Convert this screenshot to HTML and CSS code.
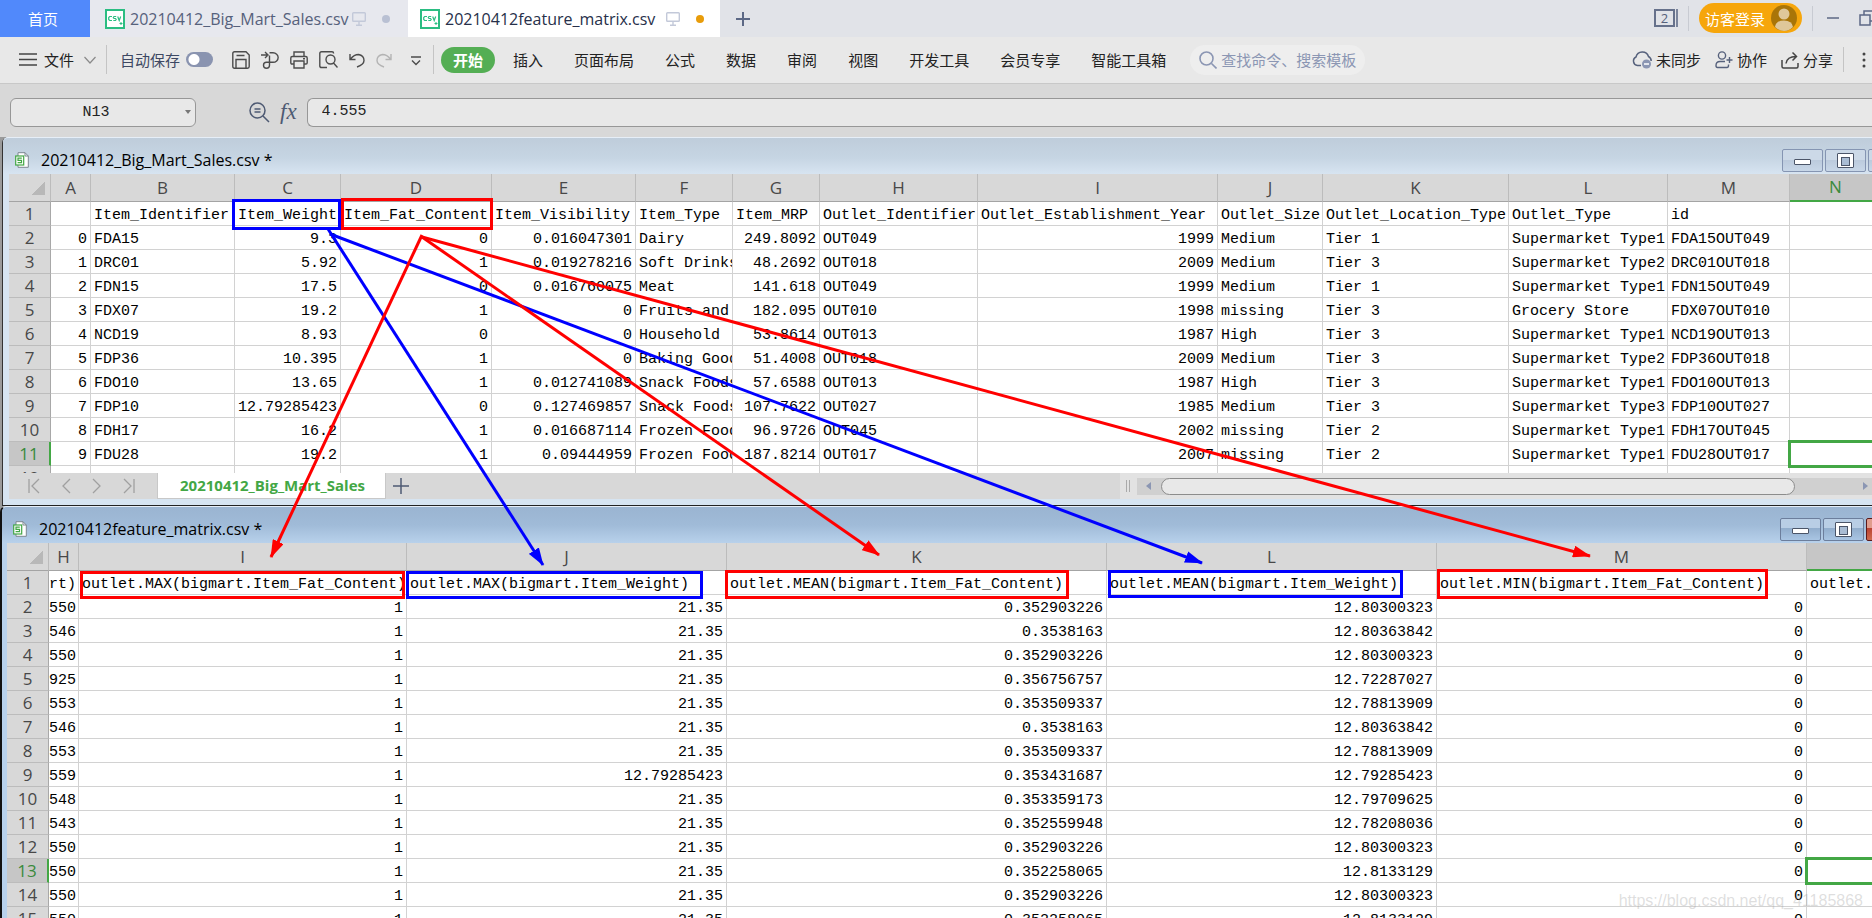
FILE: index.html
```
<!DOCTYPE html>
<html lang="zh-CN">
<head>
  <meta charset="UTF-8" />
  <title>20210412feature_matrix.csv</title>
  <link rel="stylesheet" href="styles.css">
</head>
<body>

<svg class="defs" aria-hidden="true">
  <symbol id="i-csv" viewBox="0 0 20 20">
    <rect x="1" y="1" width="18" height="18" fill="#fff" stroke="#2bbd82" stroke-width="2"/>
    <path d="M7 7.500H4.700l-1 1v2l1 1H7M11.200 7.500H9l-.7 1 .7 1h1.500l.7 1-.7 1H8.300M12.700 7.500l1.500 4 1.500-4" fill="none" stroke="#2bbd82" stroke-width="1.200"/>
    <path d="M14.500 14.500h3M16 13v3" stroke="#2bbd82"/>
  </symbol>
  <symbol id="i-screen" viewBox="0 0 14 14">
    <path d="M1.500.7h11q.8 0 .8.8v7q0 .8-.8.8h-11q-.8 0-.8-.8v-7q0-.8.8-.8zM7 9.500v3.500M4 13.200h6" fill="none" stroke="#c3c9d9" stroke-width="1.400"/>
  </symbol>
  <symbol id="i-doc" viewBox="0 0 14 16">
    <path d="M4 .7h6l3.300 3.300v11.300H3V.7z" fill="#fff" stroke="#7d8790"/>
    <path d="M10 .7v3.300h3.300" fill="none" stroke="#7d8790"/>
    <rect x=".7" y="4" width="8" height="9" fill="#fff" stroke="#43a745" stroke-width="1.200"/>
    <path d="M6.800 6.200H3v2.200h3.500v2.300H2.600" fill="none" stroke="#43a745" stroke-width="1.200"/>
  </symbol>
</svg>

<header class="tabbar">
  <button class="home">首页</button>
  <div class="doc-tab">
    <svg width="20" height="20"><use href="#i-csv"/></svg>
    <button class="doc-name">20210412_Big_Mart_Sales.csv</button>
    <svg class="screen" width="14" height="14"><use href="#i-screen"/></svg>
    <i class="dot"></i>
  </div>
  <div class="doc-tab current">
    <svg width="20" height="20"><use href="#i-csv"/></svg>
    <button class="doc-name">20210412feature_matrix.csv</button>
    <svg class="screen" width="14" height="14"><use href="#i-screen"/></svg>
    <i class="dot"></i>
  </div>
  <button class="new-tab" aria-label="新建">
    <svg width="16" height="16"><path d="M8 1v14M1 8h14" stroke="#5c6885" stroke-width="2"/></svg>
  </button>
  <div class="tabbar-right">
    <button class="count" aria-label="窗口"><span>2</span></button>
    <span class="sep"></span>
    <button class="login">访客登录
      <svg width="26" height="26" viewBox="0 0 26 26">
        <circle cx="13" cy="13" r="13" fill="#a97508"/>
        <circle cx="13" cy="9" r="5.500" fill="#dfc79a"/>
        <path d="M4 22q1-6.500 9-6.500t9 6.500q-4 4-9 4t-9-4z" fill="#dfc79a"/>
      </svg>
    </button>
    <span class="sep"></span>
    <button class="minimize" aria-label="最小化"><svg width="12" height="14"><path d="M0 7h12" stroke="#5c6885" stroke-width="1.500"/></svg></button>
    <button class="restore" aria-label="还原"><svg width="16" height="16" fill="none" stroke="#5c6885" stroke-width="1.500"><path d="M1 5h10v10H1zM5 5V1h10v10h-4"/></svg></button>
  </div>
</header>

<nav class="ribbon">
  <button class="file">
    <svg width="18" height="13"><path d="M0 1h18M0 6.500h18M0 12h18" stroke="#444" stroke-width="1.300"/></svg>
    文件
    <svg class="chev" width="12" height="8"><path d="M.5 1l5.500 6 5.500-6" fill="none" stroke="#8a8a8a" stroke-width="1.200"/></svg>
  </button>
  <span class="rule"></span>
  <label class="autosave">自动保存 <input type="checkbox"></label>
  <div class="quick">
    <button aria-label="保存"><svg width="18" height="18" viewBox="0 0 18 18"><path d="M2.500.8h11.500l3.200 3.200v11.500q0 1.700-1.700 1.700h-13q-1.700 0-1.700-1.700v-13q0-1.700 1.700-1.700zM4 17V8.500h10V17M4.500 4.500h8"/></svg></button>
    <button aria-label="输出"><svg width="18" height="18" viewBox="0 0 18 18"><path d="M0 4h6M4 1l3 3-3 3M8.500 1.800h3.500a5 4.600 0 010 9.500H5.500a3 3 0 103 3V4.500"/></svg></button>
    <button aria-label="打印"><svg width="18" height="18" viewBox="0 0 18 18"><path d="M4 5V1h10v4M4 13H2q-1.200 0-1.200-1.200V7Q.8 5.500 2.300 5.500h13.400q1.500 0 1.500 1.500v4.800Q17.200 13 16 13h-2M4 10h10v7H4zM13 7.800h2"/></svg></button>
    <button aria-label="打印预览"><svg width="19" height="18" viewBox="0 0 19 18"><path d="M8 16.500H2.500Q.8 16.500.8 15V2.500Q.8.800 2.500.8H13q1.600 0 1.600 1.700M16 8.500a4.500 4.500 0 11-9 0 4.500 4.500 0 019 0zM14.500 12l4 4.500"/></svg></button>
    <button aria-label="撤销"><svg width="16" height="18" viewBox="0 0 16 18"><path d="M1 3v5.500h5.500M1.500 8Q5 3.500 9.500 3.500 15 4.500 15 9.500q0 4-7 6.500"/></svg></button>
    <button class="off" aria-label="恢复"><svg width="16" height="18" viewBox="0 0 16 18"><path d="M15 3v5.500H9.500M14.500 8Q11 3.500 6.500 3.500 1 4.500 1 9.500q0 4 7 6.500"/></svg></button>
    <button aria-label="更多"><svg width="10" height="18" viewBox="0 0 10 18"><path d="M0 6h10M1 9.500l4 4 4-4"/></svg></button>
  </div>
  <span class="rule"></span>
  <div class="menus">
    <button class="on">开始</button>
    <button>插入</button>
    <button>页面布局</button>
    <button>公式</button>
    <button>数据</button>
    <button>审阅</button>
    <button>视图</button>
    <button>开发工具</button>
    <button>会员专享</button>
    <button>智能工具箱</button>
  </div>
  <label class="search">
    <svg width="18" height="18" fill="none" stroke="#8b96b3" stroke-width="1.600"><circle cx="7.500" cy="7.500" r="6.500"/><path d="M12.500 12.500l5 5"/></svg>
    <input type="text" placeholder="查找命令、搜索模板" aria-label="查找命令">
  </label>
  <div class="share">
    <button><svg width="20" height="18" fill="none" stroke="#56617c" stroke-width="1.500"><path d="M9 14.500H5.500A4.500 4.500 0 014 6a6.500 6.500 0 0112.500-.5q2.700 1.500 2.700 4.500"/><circle cx="14.500" cy="13" r="4.500" fill="#8b96b3" stroke="none"/><path d="M12 13h5" stroke="#fff"/></svg>未同步</button>
    <button><svg width="18" height="18" fill="none" stroke="#56617c" stroke-width="1.400"><circle cx="7" cy="4.500" r="3.600"/><path d="M10 10.500H5q-4 0-4 4 0 2 1.500 2h9.500q1.500 0 1.500-2v-1M11.500 9h6M14.500 6v6"/></svg>协作</button>
    <button><svg width="18" height="18" fill="none" stroke="#444" stroke-width="1.500"><path d="M1 9v6.500q0 1.500 1.500 1.500h13q1.500 0 1.500-1.500V12M5 12.500Q6 5.500 15 5.500M11.500 1.500l4 4-4 4"/></svg>分享</button>
    <span class="rule"></span>
    <button class="dots" aria-label="更多"><svg width="4" height="18" fill="#444"><circle cx="2" cy="3" r="1.500"/><circle cx="2" cy="9" r="1.500"/><circle cx="2" cy="15" r="1.500"/></svg></button>
  </div>
</nav>

<div class="formula-bar">
  <div class="name-box">
    <input type="text" value="N13" aria-label="名称框">
    <svg width="6" height="4"><path d="M0 0h6L3 4z" fill="#777"/></svg>
  </div>
  <div class="fx">
    <svg width="21" height="21" fill="none" stroke="#4e5a73" stroke-width="1.500"><circle cx="8.500" cy="8.500" r="7.500"/><path d="M14 14l6 6M5.500 7h6M5.500 10h6"/></svg>
    <em>fx</em>
  </div>
  <input class="formula" type="text" value="4.555" aria-label="编辑栏">
</div>

<main class="desk">

  <section class="window back">
    <div class="titlebar">
      <svg width="14" height="16"><use href="#i-doc"/></svg>
      <span>20210412_Big_Mart_Sales.csv *</span>
      <div class="win-btns">
        <button aria-label="最小化"><i class="min"></i></button>
        <button aria-label="最大化"><i class="max"></i></button>
        <button aria-label="关闭"></button>
      </div>
    </div>
    <div class="view">
      <table class="sheet sales">
        <colgroup>
          <col class="c-head"><col class="c-a"><col class="c-b"><col class="c-c"><col class="c-d"><col class="c-e"><col class="c-f"><col class="c-g"><col class="c-h"><col class="c-i"><col class="c-j"><col class="c-k"><col class="c-l"><col class="c-m"><col>
        </colgroup>
        <thead>
          <tr><th class="corner"></th><th>A</th><th>B</th><th>C</th><th>D</th><th>E</th><th>F</th><th>G</th><th>H</th><th>I</th><th>J</th><th>K</th><th>L</th><th>M</th><th class="sel">N</th></tr>
        </thead>
        <tbody>
          <tr><th>1</th><td></td><td>Item_Identifier</td><td>Item_Weight</td><td>Item_Fat_Content</td><td>Item_Visibility</td><td>Item_Type</td><td>Item_MRP</td><td>Outlet_Identifier</td><td>Outlet_Establishment_Year</td><td>Outlet_Size</td><td>Outlet_Location_Type</td><td>Outlet_Type</td><td>id</td><td></td></tr>
          <tr><th>2</th><td class="n">0</td><td>FDA15</td><td class="n">9.3</td><td class="n">0</td><td class="n">0.016047301</td><td>Dairy</td><td class="n">249.8092</td><td>OUT049</td><td class="n">1999</td><td>Medium</td><td>Tier 1</td><td>Supermarket Type1</td><td>FDA15OUT049</td><td></td></tr>
          <tr><th>3</th><td class="n">1</td><td>DRC01</td><td class="n">5.92</td><td class="n">1</td><td class="n">0.019278216</td><td>Soft Drinks</td><td class="n">48.2692</td><td>OUT018</td><td class="n">2009</td><td>Medium</td><td>Tier 3</td><td>Supermarket Type2</td><td>DRC01OUT018</td><td></td></tr>
          <tr><th>4</th><td class="n">2</td><td>FDN15</td><td class="n">17.5</td><td class="n">0</td><td class="n">0.016760075</td><td>Meat</td><td class="n">141.618</td><td>OUT049</td><td class="n">1999</td><td>Medium</td><td>Tier 1</td><td>Supermarket Type1</td><td>FDN15OUT049</td><td></td></tr>
          <tr><th>5</th><td class="n">3</td><td>FDX07</td><td class="n">19.2</td><td class="n">1</td><td class="n">0</td><td>Fruits and</td><td class="n">182.095</td><td>OUT010</td><td class="n">1998</td><td>missing</td><td>Tier 3</td><td>Grocery Store</td><td>FDX07OUT010</td><td></td></tr>
          <tr><th>6</th><td class="n">4</td><td>NCD19</td><td class="n">8.93</td><td class="n">0</td><td class="n">0</td><td>Household</td><td class="n">53.8614</td><td>OUT013</td><td class="n">1987</td><td>High</td><td>Tier 3</td><td>Supermarket Type1</td><td>NCD19OUT013</td><td></td></tr>
          <tr><th>7</th><td class="n">5</td><td>FDP36</td><td class="n">10.395</td><td class="n">1</td><td class="n">0</td><td>Baking Goods</td><td class="n">51.4008</td><td>OUT018</td><td class="n">2009</td><td>Medium</td><td>Tier 3</td><td>Supermarket Type2</td><td>FDP36OUT018</td><td></td></tr>
          <tr><th>8</th><td class="n">6</td><td>FDO10</td><td class="n">13.65</td><td class="n">1</td><td class="n">0.012741089</td><td>Snack Foods</td><td class="n">57.6588</td><td>OUT013</td><td class="n">1987</td><td>High</td><td>Tier 3</td><td>Supermarket Type1</td><td>FDO10OUT013</td><td></td></tr>
          <tr><th>9</th><td class="n">7</td><td>FDP10</td><td class="n">12.79285423</td><td class="n">0</td><td class="n">0.127469857</td><td>Snack Foods</td><td class="n">107.7622</td><td>OUT027</td><td class="n">1985</td><td>Medium</td><td>Tier 3</td><td>Supermarket Type3</td><td>FDP10OUT027</td><td></td></tr>
          <tr><th>10</th><td class="n">8</td><td>FDH17</td><td class="n">16.2</td><td class="n">1</td><td class="n">0.016687114</td><td>Frozen Foods</td><td class="n">96.9726</td><td>OUT045</td><td class="n">2002</td><td>missing</td><td>Tier 2</td><td>Supermarket Type1</td><td>FDH17OUT045</td><td></td></tr>
          <tr><th class="sel">11</th><td class="n">9</td><td>FDU28</td><td class="n">19.2</td><td class="n">1</td><td class="n">0.09444959</td><td>Frozen Foods</td><td class="n">187.8214</td><td>OUT017</td><td class="n">2007</td><td>missing</td><td>Tier 2</td><td>Supermarket Type1</td><td>FDU28OUT017</td><td class="active"></td></tr>
          <tr><th>12</th><td></td><td></td><td></td><td></td><td></td><td></td><td></td><td></td><td></td><td></td><td></td><td></td><td></td><td></td></tr>
        </tbody>
      </table>
    </div>
    <div class="sheet-bar">
      <div class="pager">
        <button aria-label="第一张"><svg width="12" height="16"><path d="M1 1v14M11 1L4 8l7 7"/></svg></button>
        <button aria-label="上一张"><svg width="12" height="16"><path d="M10 1L3 8l7 7"/></svg></button>
        <button aria-label="下一张"><svg width="12" height="16"><path d="M2 1l7 7-7 7"/></svg></button>
        <button aria-label="最后一张"><svg width="12" height="16"><path d="M11 1v14M1 1l7 7-7 7"/></svg></button>
      </div>
      <button class="sheet-name">20210412_Big_Mart_Sales</button>
      <button class="add" aria-label="新建工作表"><svg width="16" height="16"><path d="M8 0v16M0 8h16" stroke="#4e5a73" stroke-width="1.500"/></svg></button>
      <div class="scroll">
        <span class="grip"></span>
        <div class="track">
          <svg width="5" height="8"><path d="M5 0v8L0 4z" fill="#8b96b3"/></svg>
          <span class="thumb"></span>
          <svg width="5" height="8"><path d="M0 0v8l5-4z" fill="#8b96b3"/></svg>
        </div>
      </div>
    </div>
  </section>

  <section class="window front">
    <div class="titlebar">
      <svg width="14" height="16"><use href="#i-doc"/></svg>
      <span>20210412feature_matrix.csv *</span>
      <div class="win-btns">
        <button aria-label="最小化"><i class="min"></i></button>
        <button aria-label="最大化"><i class="max"></i></button>
        <button class="close" aria-label="关闭"></button>
      </div>
    </div>
    <table class="sheet matrix">
      <colgroup>
        <col class="c-head"><col class="m-h"><col class="m-i"><col class="m-j"><col class="m-k"><col class="m-l"><col class="m-m"><col>
      </colgroup>
      <thead>
        <tr><th class="corner"></th><th>H</th><th>I</th><th>J</th><th>K</th><th>L</th><th>M</th><th class="sel"></th></tr>
      </thead>
      <tbody>
        <tr><th>1</th><td>rt)</td><td>outlet.MAX(bigmart.Item_Fat_Content)</td><td>outlet.MAX(bigmart.Item_Weight)</td><td>outlet.MEAN(bigmart.Item_Fat_Content)</td><td>outlet.MEAN(bigmart.Item_Weight)</td><td>outlet.MIN(bigmart.Item_Fat_Content)</td><td>outlet.</td></tr>
        <tr><th>2</th><td class="n">550</td><td class="n">1</td><td class="n">21.35</td><td class="n">0.352903226</td><td class="n">12.80300323</td><td class="n">0</td><td></td></tr>
        <tr><th>3</th><td class="n">546</td><td class="n">1</td><td class="n">21.35</td><td class="n">0.3538163</td><td class="n">12.80363842</td><td class="n">0</td><td></td></tr>
        <tr><th>4</th><td class="n">550</td><td class="n">1</td><td class="n">21.35</td><td class="n">0.352903226</td><td class="n">12.80300323</td><td class="n">0</td><td></td></tr>
        <tr><th>5</th><td class="n">925</td><td class="n">1</td><td class="n">21.35</td><td class="n">0.356756757</td><td class="n">12.72287027</td><td class="n">0</td><td></td></tr>
        <tr><th>6</th><td class="n">553</td><td class="n">1</td><td class="n">21.35</td><td class="n">0.353509337</td><td class="n">12.78813909</td><td class="n">0</td><td></td></tr>
        <tr><th>7</th><td class="n">546</td><td class="n">1</td><td class="n">21.35</td><td class="n">0.3538163</td><td class="n">12.80363842</td><td class="n">0</td><td></td></tr>
        <tr><th>8</th><td class="n">553</td><td class="n">1</td><td class="n">21.35</td><td class="n">0.353509337</td><td class="n">12.78813909</td><td class="n">0</td><td></td></tr>
        <tr><th>9</th><td class="n">559</td><td class="n">1</td><td class="n">12.79285423</td><td class="n">0.353431687</td><td class="n">12.79285423</td><td class="n">0</td><td></td></tr>
        <tr><th>10</th><td class="n">548</td><td class="n">1</td><td class="n">21.35</td><td class="n">0.353359173</td><td class="n">12.79709625</td><td class="n">0</td><td></td></tr>
        <tr><th>11</th><td class="n">543</td><td class="n">1</td><td class="n">21.35</td><td class="n">0.352559948</td><td class="n">12.78208036</td><td class="n">0</td><td></td></tr>
        <tr><th>12</th><td class="n">550</td><td class="n">1</td><td class="n">21.35</td><td class="n">0.352903226</td><td class="n">12.80300323</td><td class="n">0</td><td></td></tr>
        <tr><th class="sel">13</th><td class="n">550</td><td class="n">1</td><td class="n">21.35</td><td class="n">0.352258065</td><td class="n">12.8133129</td><td class="n">0</td><td class="active"></td></tr>
        <tr><th>14</th><td class="n">550</td><td class="n">1</td><td class="n">21.35</td><td class="n">0.352903226</td><td class="n">12.80300323</td><td class="n">0</td><td></td></tr>
        <tr><th>15</th><td class="n">550</td><td class="n">1</td><td class="n">21.35</td><td class="n">0.352258065</td><td class="n">12.8133129</td><td class="n">0</td><td></td></tr>
      </tbody>
    </table>
  </section>

</main>

<!-- arrows from the source columns to the generated features -->
<svg class="marks" width="1872" height="918" viewBox="0 0 1872 918" fill="none" stroke-width="3">
  <defs>
    <marker id="tip-red" markerUnits="userSpaceOnUse" markerWidth="18" markerHeight="12" refX="17" refY="6" orient="auto"><path d="M0 0l18 6-18 6z" fill="#f00"/></marker>
    <marker id="tip-blue" markerUnits="userSpaceOnUse" markerWidth="18" markerHeight="12" refX="17" refY="6" orient="auto"><path d="M0 0l18 6-18 6z" fill="#00f"/></marker>
  </defs>
  <g stroke="#00f">
    <rect x="233.500" y="200.500" width="106" height="28"/>
    <rect x="407.500" y="572.500" width="294" height="25"/>
    <rect x="1109.500" y="571.500" width="292" height="25"/>
    <path d="M328 229L543 565" marker-end="url(#tip-blue)"/>
    <path d="M330 234L1202 563" marker-end="url(#tip-blue)"/>
  </g>
  <g stroke="#f00">
    <rect x="342.500" y="199.500" width="149" height="29"/>
    <rect x="81.500" y="572.500" width="322" height="25"/>
    <rect x="726.500" y="571.500" width="341" height="26"/>
    <rect x="1438.500" y="570.500" width="328" height="27"/>
    <path d="M422 235L271 557" marker-end="url(#tip-red)"/>
    <path d="M422 237L879 555" marker-end="url(#tip-red)"/>
    <path d="M422 237L1590 556" marker-end="url(#tip-red)"/>
  </g>
</svg>
<span class="watermark">https://blog.csdn.net/qq_41185868</span>

</body>
</html>
```
FILE: styles.css
```
* {
  box-sizing: border-box;
}
body {
  margin: 0;
  height: 100vh;
  overflow: hidden;
  position: relative;
  display: flex;
  flex-direction: column;
  background: #d8d8d8;
  color: #222;
  font-family: "Open Sans", "Noto Sans CJK SC", sans-serif;
  font-size: 15px;
}
button, input {
  font: inherit;
  color: inherit;
  border: none;
  background: none;
  padding: 0;
  margin: 0;
}
button {
  white-space: nowrap;
}
svg {
  flex: none;
}
.defs {
  position: absolute;
  width: 0;
  height: 0;
}

/* document tabs */
.tabbar {
  display: flex;
  flex: none;
  height: 37px;
  background: #e1e3e8;
}
.home {
  width: 90px;
  padding-right: 4px;
  background: #5189fb;
  color: #fff;
}
.doc-tab {
  display: flex;
  align-items: center;
  width: 318px;
  padding: 0 18px 0 15px;
  background: #e7e8ee;
  color: #56617c;
}
.doc-name {
  margin-left: 5px;
  font-size: 16px;
}
.doc-tab .screen {
  margin-left: auto;
}
.dot {
  width: 8px;
  height: 8px;
  margin-left: 16px;
  border-radius: 50%;
  background: #b9c0d3;
}
.doc-tab.current {
  width: 312px;
  padding: 0 16px 0 12px;
  background: #fff;
  color: #27304a;
}
.current .dot {
  background: #e89c0a;
}
.new-tab {
  width: 46px;
  display: flex;
  align-items: center;
  justify-content: center;
}
.tabbar-right {
  display: flex;
  align-items: center;
  margin-left: auto;
  margin-right: -3px;
  padding-bottom: 1px;
}
.sep {
  width: 1px;
  height: 25px;
  margin: 0 10px;
  background: #c8cbd2;
}
.tabbar-right button {
  display: flex;
  align-items: center;
}
.count {
  height: 18px;
  padding-right: 1px;
  border-right: 2px solid #7b859c;
}
.count span {
  width: 21px;
  height: 18px;
  line-height: 14px;
  border: 2px solid #66718b;
  color: #56617c;
  font-size: 13px;
}
.tabbar-right .login {
  height: 30px;
  padding: 0 5px 0 6px;
  gap: 6px;
  border-radius: 15px;
  background: #f6a60c;
  color: #fff;
}
.minimize {
  padding: 0 20px 0 4px;
}

/* ribbon */
.ribbon {
  display: flex;
  flex: none;
  align-items: center;
  height: 46px;
  padding: 0 6px 1px 19px;
  background: #e8e8e8;
}
.ribbon button {
  display: flex;
  align-items: center;
}
.file {
  gap: 7px;
}
.file .chev {
  margin-left: 3px;
}
.rule {
  width: 1px;
  height: 29px;
  background: #c4c4c4;
}
.file + .rule {
  margin: 0 13px 0 10px;
}
.autosave {
  display: flex;
  align-items: center;
  gap: 6px;
  color: #3d4863;
}
.autosave input {
  appearance: none;
  width: 27px;
  height: 15px;
  border-radius: 8px;
  background: radial-gradient(circle at 8px 50%, #fff 5px, #8a94b0 6px);
}
.quick {
  display: flex;
  align-items: center;
  gap: 11px;
  margin: 0 12px 0 19px;
}
.quick svg {
  fill: none;
  stroke: #4c4c4c;
  stroke-width: 1.4;
}
.quick .off svg {
  stroke: #b4b4b4;
}
.quick button:last-child {
  margin-left: 8px;
}
.menus {
  display: flex;
  align-items: center;
  gap: 31px;
  margin-left: 7px;
}
.menus .on {
  height: 26px;
  padding: 0 12px;
  margin-right: -13px;
  border-radius: 13px;
  background: #54ae54;
  color: #fff;
  font-weight: bold;
}
.search {
  display: flex;
  align-items: center;
  gap: 4px;
  width: 175px;
  height: 30px;
  margin-left: 24px;
  padding-left: 9px;
  border-radius: 15px;
  background: #eee;
}
.search input {
  width: 140px;
}
.search input::placeholder {
  color: #8b96b3;
  opacity: 1;
}
.share {
  display: flex;
  align-items: center;
  gap: 14px;
  margin-left: auto;
}
.share button {
  gap: 4px;
}
.share .rule {
  height: 25px;
  margin: 0 4px 0 -4px;
}

/* formula bar */
.formula-bar {
  display: flex;
  flex: none;
  align-items: center;
  height: 54px;
  padding: 3px 0 0 10px;
  border-top: 1px solid #c8c8c8;
  font-family: "Liberation Mono", "Noto Sans CJK SC", monospace;
}
.name-box {
  display: flex;
  align-items: center;
  width: 186px;
  height: 29px;
  padding-right: 4px;
  border: 1px solid #979797;
  border-radius: 6px;
  background: #e8e8e8;
}
.name-box input {
  flex: 1;
  min-width: 0;
  padding-right: 4px;
  text-align: center;
}
.fx {
  display: flex;
  align-items: center;
  gap: 10px;
  margin: 0 10px 0 53px;
}
.fx em {
  font-family: "Liberation Serif", serif;
  font-size: 23px;
  line-height: 24px;
  color: #4e5a73;
}
.formula {
  flex: 1;
  height: 29px;
  padding: 0 14px 2px;
  border: 1px solid #979797;
  border-right: none;
  border-radius: 6px 0 0 6px;
  background: #e8e8e8;
}

/* workbook windows */
.desk {
  flex: 1;
  min-height: 0;
  overflow: hidden;
  background: #9a9a9a;
}
.window {
  margin-right: -9px;
}
.back {
  margin-left: 2px;
  padding: 0 0 6px 6px;
  border-left: 1px solid #333;
  border-bottom: 1px solid #222;
  border-top-left-radius: 6px;
  background: #d6e4f1;
}
.front {
  padding-left: 5px;
  border-left: 2px solid #111;
  border-top: 1px solid #e6eef7;
  border-top-left-radius: 6px;
  background: #b8d1eb;
}
.titlebar {
  display: flex;
  align-items: center;
  height: 37px;
  margin-left: -6px;
  padding: 8px 0 0 12px;
  background: linear-gradient(#bfcddb, #c6d5e3 55%, #d7e4f1);
  border-top-left-radius: 5px;
  color: #000;
  font-size: 16px;
}
.back .titlebar {
  border-top: 1px solid #e6eef7;
}
.front .titlebar {
  height: 36px;
  margin-left: -5px;
  padding-left: 11px;
  background: linear-gradient(#9ab4d1, #a0bbd8 50%, #b8d1eb);
}
.titlebar span {
  margin-left: 12px;
}
.win-btns {
  display: flex;
  gap: 2px;
  margin: 0 -28px 0 auto;
}
.front .win-btns {
  margin-right: -26px;
}
.win-btns button {
  display: flex;
  align-items: center;
  justify-content: center;
  width: 41px;
  height: 23px;
  border: 1px solid #8595b2;
  border-radius: 2px;
  background: linear-gradient(#ccd9e7 50%, #bccbdd 50%, #c8d7e8);
}
.front .win-btns button {
  border-color: #6c7e9c;
  background: linear-gradient(#b9cee5 45%, #92aecd 45%, #a9c5e3);
}
.front .win-btns .close {
  border-color: #5c1a1a;
  background: linear-gradient(#e09c8c 45%, #bb4332 45%, #cf6a4e);
}
.min {
  width: 17px;
  height: 6px;
  margin-top: 3px;
  border: 1px solid #4b5568;
  border-radius: 1px;
  background: #fff;
}
.max {
  width: 17px;
  height: 15px;
  border: 1px solid #4b5568;
  border-radius: 1px;
  background: #fff;
  padding: 3px;
}
.max::after {
  content: "";
  display: block;
  height: 7px;
  border: 1px solid #4b5568;
  background: #a9bcd3;
}

/* sheets */
.view {
  height: 299px;
  overflow: hidden;
}
.sheet {
  table-layout: fixed;
  width: 100%;
  border-collapse: separate;
  border-spacing: 0;
  background: #fff;
}
.sheet th {
  height: 24px;
  padding: 0;
  border-right: 1px solid #a8a8a8;
  border-bottom: 1px solid #bcbcbc;
  background: #d8d8d8;
  color: #484848;
  font-size: 17px;
  font-weight: normal;
  line-height: 22px;
}
.sheet thead th {
  height: 28px;
  border-right-color: #bcbcbc;
  border-bottom-color: #a4a4a4;
}
.sheet .corner {
  background: linear-gradient(135deg, transparent 50%, #b8b8b8 50%) 22px 7px / 14px 14px no-repeat #d8d8d8;
}
.sheet th.sel {
  background: #c6c6c6;
  color: #3a8a3c;
  border-right: 2px solid #43a745;
}
.sheet thead th.sel {
  border-right: none;
  border-bottom: 2px solid #43a745;
}
.sheet td {
  height: 24px;
  padding: 5px 3px 0;
  border-right: 1px solid #d2d2d2;
  border-bottom: 1px solid #d2d2d2;
  overflow: hidden;
  white-space: nowrap;
  color: #000;
  font-family: "Liberation Mono", monospace;
  font-size: 15px;
  line-height: 18px;
}
.sheet .n {
  text-align: right;
}
.matrix td:nth-child(2) {
  padding-left: 0;
  padding-right: 2px;
}
.sheet td.active {
  outline: 3px solid #43a745;
  outline-offset: -1px;
}
.c-head { width: 42px; }
.c-a { width: 40px; }
.c-b { width: 144px; }
.c-c { width: 106px; }
.c-d { width: 151px; }
.c-e { width: 144px; }
.c-f { width: 97px; }
.c-g { width: 87px; }
.c-h { width: 158px; }
.c-i { width: 240px; }
.c-j { width: 105px; }
.c-k { width: 186px; }
.c-l { width: 159px; }
.c-m { width: 122px; }
.m-h { width: 30px; }
.m-i { width: 328px; }
.m-j { width: 320px; }
.m-k { width: 380px; }
.m-l { width: 330px; }
.m-m { width: 370px; }

/* sheet tabs and scroll bar */
.sheet-bar {
  display: flex;
  align-items: stretch;
  height: 26px;
  background: #d8d8d8;
}
.pager {
  display: flex;
  align-items: center;
  justify-content: space-between;
  width: 148px;
  padding: 0 22px 0 19px;
}
.pager button {
  display: flex;
}
.pager svg {
  fill: none;
  stroke: #a0a0a0;
  stroke-width: 1.3;
}
.sheet-name {
  padding: 0 20px 2px 22px;
  border: 1px solid #c8c8c8;
  border-top: none;
  background: #fff;
  color: #43a745;
  font-size: 15px;
  font-weight: bold;
  line-height: 24px;
}
.add {
  display: flex;
  align-items: center;
  padding: 0 7px;
}
.scroll {
  display: flex;
  align-items: center;
  flex: 0 0 761px;
  gap: 7px;
  margin-left: auto;
  padding: 0 9px 0 6px;
  background: #e2e2e2;
}
.grip {
  width: 4px;
  height: 12px;
  border: 1px solid #aaa;
  border-width: 0 1px;
}
.track {
  display: flex;
  align-items: center;
  flex: 1;
  height: 17px;
  padding: 0 4px 0 9px;
  background: #d0d0d0;
}
.thumb {
  flex: 1;
  height: 17px;
  margin: 0 68px 0 10px;
  border: 1px solid #8c8c8c;
  border-radius: 9px;
  background: #e8e8e8;
}

/* annotations lie over both windows */
.marks {
  position: absolute;
  left: 0;
  top: 0;
}
.watermark {
  position: absolute;
  right: 9px;
  bottom: 8px;
  color: rgba(160, 160, 160, 0.35);
  font-family: "Liberation Sans", sans-serif;
  font-size: 16px;
}
```
